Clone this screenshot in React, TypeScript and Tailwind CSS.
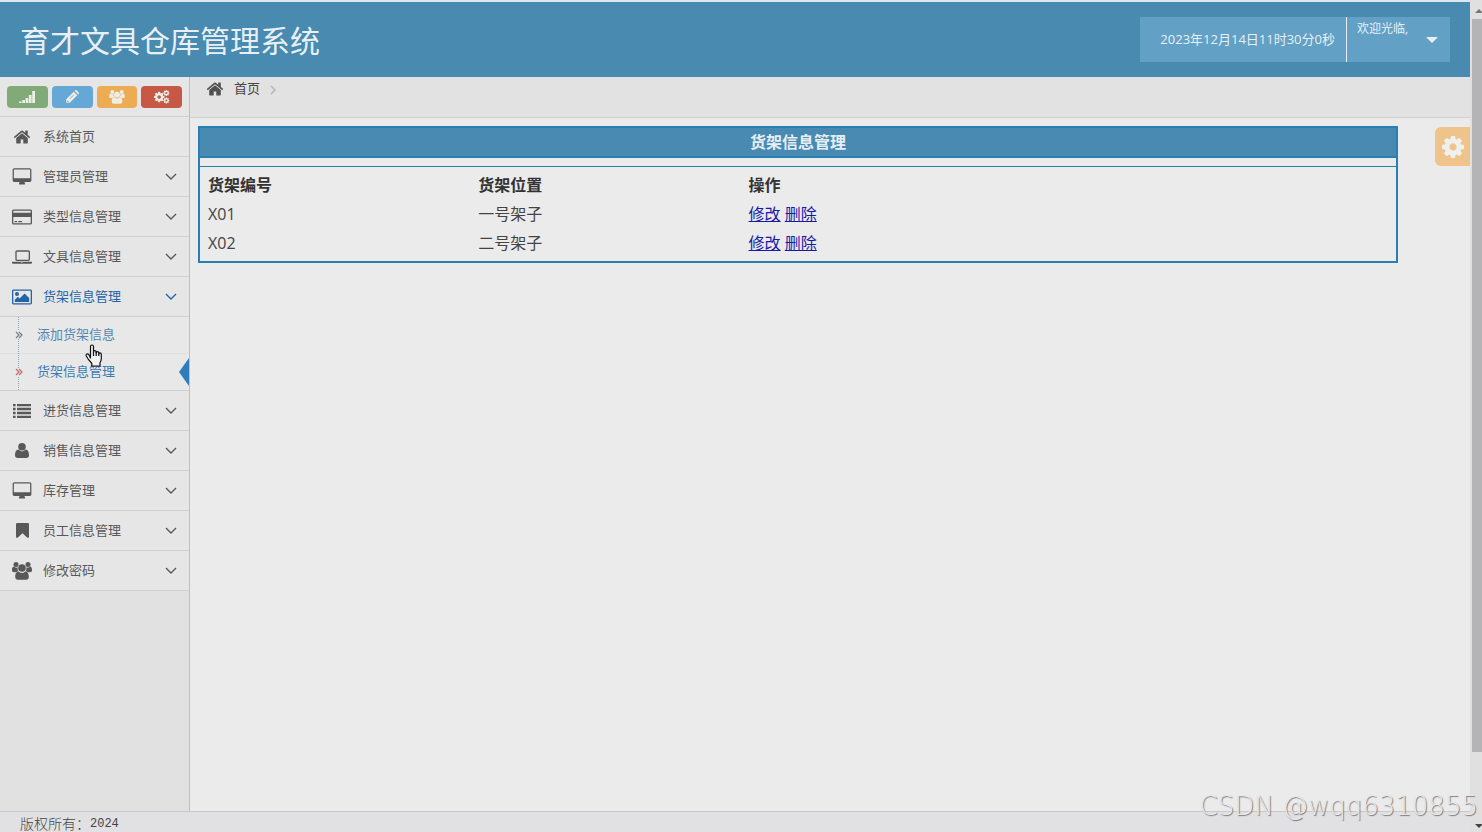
import type { ReactNode } from "react";

const DESKTOP =
  "M1856 992v-832q0-13-9.5-22.5t-22.5-9.5h-1600q-13 0-22.5 9.5t-9.5 22.5v832q0 13 9.5 22.5t22.5 9.5h1600q13 0 22.5-9.5t9.5-22.5zm128-832v1088q0 66-47 113t-113 47h-544q0 37 16 77.5t32 71 16 43.5q0 26-19 45t-45 19h-512q-26 0-45-19t-19-45q0-14 16-44t32-70 16-78h-544q-66 0-113-47t-47-113v-1088q0-66 47-113t113-47h1600q66 0 113 47t47 113z";
const LAPTOP =
  "M480 1152q-66 0-113-47t-47-113v-704q0-66 47-113t113-47h1088q66 0 113 47t47 113v704q0 66-47 113t-113 47h-1088zm-32-864v704q0 13 9.5 22.5t22.5 9.5h1088q13 0 22.5-9.5t9.5-22.5v-704q0-13-9.5-22.5t-22.5-9.5h-1088q-13 0-22.5 9.5t-9.5 22.5zm1312 928h160v96q0 40-47 68t-113 28h-1600q-66 0-113-28t-47-68v-96h1760zm-720 96q16 0 16-16t-16-16h-160q-16 0-16 16t16 16h160z";
const HOME =
  "M1472 992v480q0 26-19 45t-45 19h-384v-384h-256v384h-384q-26 0-45-19t-19-45v-480q0-1 .5-3t.5-3l575-474 575 474q1 2 1 6zm223-69l-62 74q-8 9-21 11h-3q-13 0-21-7l-692-577-692 577q-12 8-24 7-13-2-21-11l-62-74q-8-10-7-23.5t11-21.5l719-599q32-26 76-26t76 26l244 204v-195q0-14 9-23t23-9h192q14 0 23 9t9 23v408l219 182q10 8 11 21.5t-7 23.5z";
const COG =
  "M1152 896q0-106-75-181t-181-75-181 75-75 181 75 181 181 75 181-75 75-181zm512-109v222q0 12-8 23t-20 13l-185 28q-19 54-39 91 35 50 107 138 10 12 10 25t-9 23q-27 37-99 108t-94 71q-12 0-26-9l-138-108q-44 23-91 38-16 136-29 186-7 28-36 28h-222q-14 0-24.5-8.5t-11.5-21.5l-28-184q-49-16-90-37l-141 107q-10 9-25 9-14 0-25-11-126-114-165-168-7-10-7-23 0-12 8-23 15-21 51-66.5t54-70.5q-27-50-41-99l-183-27q-13-2-21-12.5t-8-23.5v-222q0-12 8-23t19-13l186-28q14-46 39-92-40-57-107-138-10-12-10-24 0-10 9-23 26-36 98.5-107.5t94.5-71.5q13 0 26 10l138 107q44-23 91-38 16-136 29-186 7-28 36-28h222q14 0 24.5 8.5t11.5 21.5l28 184q49 16 90 37l142-107q9-9 24-9 13 0 25 10 129 119 165 170 7 8 7 22 0 12-8 23-15 21-51 66.5t-54 70.5q26 50 41 98l183 28q13 2 21 12.5t8 23.5z";

function HomeIcon({ className }: { className: string }) {
  return (
    <svg viewBox="0 0 1792 1792" className={className} fill="currentColor">
      <path d={HOME} />
    </svg>
  );
}

function DesktopIcon() {
  return (
    <svg viewBox="0 0 2048 1792" className="h-[18px] w-5" fill="currentColor">
      <path d={DESKTOP} />
    </svg>
  );
}

function LaptopIcon() {
  return (
    <svg viewBox="0 0 1920 1536" className="h-4 w-5" fill="currentColor">
      <path d={LAPTOP} />
    </svg>
  );
}

function CardIcon() {
  return (
    <svg viewBox="0 0 20 16" className="h-4 w-5" fill="currentColor">
      <path
        fillRule="evenodd"
        d="M1.5.5h17A1.5 1.5 0 0 1 20 2v12a1.5 1.5 0 0 1-1.5 1.5h-17A1.5 1.5 0 0 1 0 14V2A1.5 1.5 0 0 1 1.500.5zM1.300 1.800v2h17.400v-2zM1.300 8v6.200h17.400V8zM2.500 12h2.600v1.200H2.500zM6.300 12h3.800v1.200H6.300z"
      />
    </svg>
  );
}

function PictureIcon() {
  return (
    <svg viewBox="0 0 20 16" className="h-4 w-5" fill="currentColor">
      <path fillRule="evenodd" d="M1.4.5h17.2A1.4 1.4 0 0 1 20 1.9v12.2a1.4 1.4 0 0 1-1.4 1.4H1.4A1.4 1.4 0 0 1 0 14.1V1.9A1.4 1.4 0 0 1 1.4.5zM1.3 1.8v12.4h17.4V1.8z" />
      <circle cx="5" cy="5" r="2" />
      <path d="M2.8 13v-2.3l3-3 1.8 1.8 5-5 4.6 4.500v4z" />
    </svg>
  );
}

function ListIcon() {
  return (
    <svg viewBox="0 0 18 14" className="h-3.5 w-[18px]" fill="currentColor">
      {[0, 4, 8, 12].map((y) => (
        <g key={y}>
          <rect x="0" y={y - 0.2} width="2.6" height="2.4" rx=".3" />
          <rect x="4" y={y - 0.2} width="14" height="2.4" rx=".3" />
        </g>
      ))}
    </svg>
  );
}

function UserIcon() {
  return (
    <svg viewBox="0 0 14 15" className="h-[15px] w-3.5" fill="currentColor">
      <circle cx="7" cy="3.8" r="3.8" />
      <path d="M3.4 6.6Q5 8.4 7 8.4t3.6-1.8C13 6.8 14 9 14 12.2c0 1.8-1.1 2.8-2.6 2.8H2.6C1.1 15 0 14 0 12.2 0 9 1 6.8 3.4 6.6z" />
    </svg>
  );
}

function BookmarkIcon() {
  return (
    <svg viewBox="0 0 13 15" className="h-[15px] w-[13px]" fill="currentColor">
      <path d="M1.2 0h10.6A1.2 1.2 0 0 1 13 1.2v12.6c0 1-1.1 1.5-1.9.8L6.5 10.2l-4.6 4.4C1.1 15.3 0 14.8 0 13.8V1.2A1.2 1.2 0 0 1 1.2 0z" />
    </svg>
  );
}

function UsersIcon({ className }: { className: string }) {
  return (
    <svg viewBox="0 0 20 18" className={className} fill="currentColor">
      <circle cx="4" cy="2.6" r="2.5" />
      <circle cx="16" cy="2.6" r="2.5" />
      <circle cx="10" cy="6" r="3.8" />
      <path d="M1.7 4.5Q4 6.4 5.6 5.2 5.2 7.7 6.6 9.3 5 9.4 4.2 10.3H2C.8 10.3 0 9.7 0 8.6 0 6.5.4 4.6 1.7 4.5zM18.3 4.5Q16 6.4 14.4 5.2 14.8 7.7 13.4 9.3 15 9.4 15.8 10.3H18c1.2 0 2-.6 2-1.7 0-2.1-.4-4-1.7-4.1z" />
      <path d="M6.7 9.4Q8.3 10.9 10 10.9t3.3-1.5c2.6.1 3.5 2.5 3.5 5.4 0 1.8-1 2.9-2.7 2.9H5.9c-1.7 0-2.7-1.1-2.7-2.9 0-2.9.9-5.3 3.5-5.4z" />
    </svg>
  );
}

function SignalIcon() {
  return (
    <svg viewBox="0 0 16 12" className="h-3 w-4" fill="currentColor">
      <path d="M0 10.500h2.700V12H0zM3.300 9h2.700v3H3.300zM6.600 7h2.700v5H6.600zM9.900 4h2.700v8H9.900zM13.200 0H16v12h-2.800z" />
    </svg>
  );
}

function PencilIcon() {
  return (
    <svg viewBox="0 0 12 12" className="h-[13px] w-[13px]" fill="currentColor">
      <path d="M.2 11.8V8.5L7.1 1.6l3.3 3.3-6.9 6.9zM7.9.8l.5-.5q.7-.6 1.4 0l1.9 1.9q.6.7 0 1.4l-.5.5z" />
      <path d="M1.2 9.400l1.400 1.400-.4.400H1.200zM3.400 7.900l3.700-3.700.3.300-3.700 3.700z" fill="#65a7d5" />
    </svg>
  );
}

function CogsIcon() {
  return (
    <svg viewBox="0 0 1792 1792" className="h-4 w-4" fill="currentColor">
      <path d={COG} transform="translate(-100 210) scale(.76)" />
      <path d={COG} transform="translate(990 60) scale(.44)" />
      <path d={COG} transform="translate(990 890) scale(.44)" />
    </svg>
  );
}

function Chevron() {
  return (
    <svg viewBox="0 0 12 8" className="ml-auto h-2 w-3" fill="none" stroke="currentColor" strokeWidth="1.4">
      <path d="M1 1l5 5 5-5" />
    </svg>
  );
}

function DoubleAngle() {
  return (
    <svg viewBox="0 0 8 8" className="h-2 w-2" fill="none" stroke="currentColor" strokeWidth="1.2">
      <path d="M1 1l3 3-3 3M4 1l3 3-3 3" />
    </svg>
  );
}

type Item = { label: string; icon: ReactNode; open?: boolean; leaf?: boolean };

const items: Item[] = [
  { label: "系统首页", icon: <HomeIcon className="h-[18px] w-[18px]" />, leaf: true },
  { label: "管理员管理", icon: <DesktopIcon /> },
  { label: "类型信息管理", icon: <CardIcon /> },
  { label: "文具信息管理", icon: <LaptopIcon /> },
  { label: "货架信息管理", icon: <PictureIcon />, open: true },
  { label: "进货信息管理", icon: <ListIcon /> },
  { label: "销售信息管理", icon: <UserIcon /> },
  { label: "库存管理", icon: <DesktopIcon /> },
  { label: "员工信息管理", icon: <BookmarkIcon /> },
  { label: "修改密码", icon: <UsersIcon className="h-[18px] w-5" /> },
];

const shelves = [
  { id: "X01", place: "一号架子" },
  { id: "X02", place: "二号架子" },
];

const shortcut = "flex h-[22px] flex-1 items-center justify-center rounded-sm text-[#eeeee8]";

function Submenu() {
  return (
    <div className="relative border-t border-[#cfcfd0] bg-[#e8e8e9] text-[#5487ae]">
      <ul>
        <li className="h-[37px] border-b border-[#dedfe0]">
          <a href="#add" className="flex h-full items-center gap-3.5 pl-[15px]">
            <span className="relative z-10 bg-[#e8e8e9] text-[#77808a]"><DoubleAngle /></span>
            添加货架信息
          </a>
        </li>
        <li className="h-9">
          <a href="#manage" className="flex h-full items-center gap-3.5 pl-[15px] text-[#3b7ab0]">
            <span className="relative z-10 bg-[#e8e8e9] text-[#c4686a]"><DoubleAngle /></span>
            货架信息管理
            <svg viewBox="0 0 10 28" className="ml-auto h-7 w-2.5" fill="#2f7db8">
              <path d="M10 0v28L0 14z" />
            </svg>
          </a>
        </li>
      </ul>
      <span className="absolute inset-y-0 left-[18px] border-l border-dotted border-[#8fa4b5]" />
      {/* pointer */}
      <svg viewBox="0 0 18 23" className="absolute left-[85px] top-[27px] z-20 h-[23px] w-[18px]" fill="#f2f2f2" stroke="#111" strokeWidth="1.2" strokeLinejoin="round">
        <path d="M5.5 14V2.5Q5.5 1 7 1t1.5 1.5V8q0-1.3 1.3-1.3T11.2 8v1q0-1.3 1.3-1.3t1.3 1.3v1q0-1.2 1.2-1.2t1.3 1.4v4.6q0 2-1.3 3.7V22H6.8v-2.5L3 14.8 1.3 12q-.6-1.4.5-2t2 .6z" />
        <path d="M8.5 8v4M11.2 8v4M13.8 9.5V12" />
      </svg>
    </div>
  );
}

function Sidebar() {
  return (
    <aside className="w-[190px] shrink-0 border-r border-[#bfbfc1] bg-[#e1e1e2]">
      <div className="flex h-[39px] items-center gap-1 bg-[#e6e6e7] px-[7px]">
        <button aria-label="统计" className={`${shortcut} bg-[#80ab76]`}><SignalIcon /></button>
        <button aria-label="编辑" className={`${shortcut} bg-[#65a7d5]`}><PencilIcon /></button>
        <button aria-label="用户" className={`${shortcut} bg-[#ebac53]`}><UsersIcon className="h-3.5 w-4" /></button>
        <button aria-label="设置" className={`${shortcut} bg-[#c75845]`}><CogsIcon /></button>
      </div>
      <ul className="border-b border-[#cfcfd0] text-[13px] text-[#585858]">
        {items.map((item) => (
          <li key={item.label} className={item.open ? "text-[#2463a6]" : ""}>
            <a href="#menu" className="flex h-10 items-center gap-[11px] border-t border-[#cfcfd0] bg-[#e6e6e7] px-3">
              <span className="flex w-5 justify-center">{item.icon}</span>
              {item.label}
              {!item.leaf && <Chevron />}
            </a>
            {item.open && <Submenu />}
          </li>
        ))}
      </ul>
    </aside>
  );
}

function ShelfTable() {
  return (
    <div className="pl-2 pr-[72px] pt-2">
      <div className="border-2 border-[#2a7fb2] pb-[3px]">
        <table className="w-full table-fixed border-separate border-spacing-0 text-left text-base leading-[29px] text-[#444]">
          <colgroup>
            <col className="w-[22.6%]" />
            <col className="w-[22.6%]" />
            <col />
          </colgroup>
          <thead>
            <tr>
              <th colSpan={3} className="h-[30px] border-b-2 border-[#2a7fb2] bg-[#488ab2] text-center leading-7 text-[#e6eef3]">
                货架信息管理
              </th>
            </tr>
            <tr>
              <td colSpan={3} className="h-[9px] border-b border-[#2a7fa5]" />
            </tr>
            <tr className="text-[#333]">
              <th className="pl-2 pt-1">货架编号</th>
              <th className="pl-2 pt-1">货架位置</th>
              <th className="pl-2 pt-1">操作</th>
            </tr>
          </thead>
          <tbody>
            {shelves.map((s) => (
              <tr key={s.id}>
                <td className="pl-2">{s.id}</td>
                <td className="pl-2">{s.place}</td>
                <td className="pl-2 text-[#1a1aa8]">
                  <a href="#edit" className="underline">修改</a>{" "}
                  <a href="#delete" className="underline">删除</a>
                </td>
              </tr>
            ))}
          </tbody>
        </table>
      </div>
    </div>
  );
}

export default function App() {
  return (
    <div className="relative flex min-h-screen overflow-hidden bg-[#ebebec] font-['Open_Sans','Noto_Sans_CJK_SC',sans-serif]">
      <div className="flex min-w-0 flex-1 flex-col border-t-2 border-[#dfe7ee]">
        <header className="flex h-[75px] items-center justify-between bg-[#488ab0] px-5 text-[#e8f0f5]">
          <h1 className="pt-0.5 text-3xl">育才文具仓库管理系统</h1>
          <div className="flex h-[45px] bg-[#62a0c5]">
            <div className="flex items-center border-r border-[#e6eef3] pl-5 pr-[11px] text-[13px]">2023年12月14日11时30分0秒</div>
            <button className="flex w-[103px] items-center justify-between pl-2.5 pr-3 text-xs">
              <span className="self-start pt-1">欢迎光临,</span>
              <svg viewBox="0 0 12 6" className="h-1.5 w-3" fill="currentColor">
                <path d="M0 0h12L6 6z" />
              </svg>
            </button>
          </div>
        </header>

        <div className="flex flex-1">
          <Sidebar />
          <main className="relative min-w-0 flex-1">
            <nav className="flex h-[41px] items-start border-b border-[#cfcfd0] bg-[#e2e2e2] pl-4 pt-0.5 text-[13px] text-[#444]">
              <a href="#home" className="flex items-center gap-2.5">
                <HomeIcon className="h-[18px] w-[18px] text-[#505050]" />
                首页
              </a>
              <svg viewBox="0 0 6 10" className="ml-2.5 mt-1.5 h-2.5 w-1.5" fill="none" stroke="#b0b4ba" strokeWidth="1.5">
                <path d="M1 1l4 4-4 4" />
              </svg>
            </nav>
            <ShelfTable />
            <button aria-label="页面设置" className="absolute right-0 top-[50px] flex h-[39px] w-[35px] items-center justify-center rounded-l-md bg-[#eec48a] text-[#f0f0ef]">
              <svg viewBox="128 128 1536 1536" className="h-[22px] w-[22px]" fill="currentColor">
                <path d={COG} />
              </svg>
            </button>
          </main>
        </div>

        <footer className="flex h-[21px] items-center border-t border-[#c9c9cb] bg-[#e1e1e3] pl-5 pt-1 text-sm font-light text-[#444]">
          版权所有：<span className="font-['Liberation_Mono',monospace] text-xs">2024</span>
        </footer>
      </div>

      {/* scroll track */}
      <div className="flex w-3 shrink-0 flex-col items-end bg-[#e0e0e1] text-[#777]">
        <svg viewBox="0 0 10 19" className="h-[19px] w-2.5" fill="currentColor">
          <path d="M3 13l4-4 3 3v1z" />
        </svg>
        <div className="w-2.5 flex-1 bg-[#b4b3b5]" />
        <svg viewBox="0 0 10 80" className="h-20 w-2.5" fill="#444">
          <path d="M3 72h7v1l-3 3z" />
        </svg>
      </div>

      <div className="absolute bottom-2 right-1 font-['DejaVu_Sans',sans-serif] text-[26px] font-extralight leading-9 text-[#e8e8e9] [text-shadow:1px_1px_1px_#777]">
        CSDN @wqq6310855
      </div>
    </div>
  );
}
